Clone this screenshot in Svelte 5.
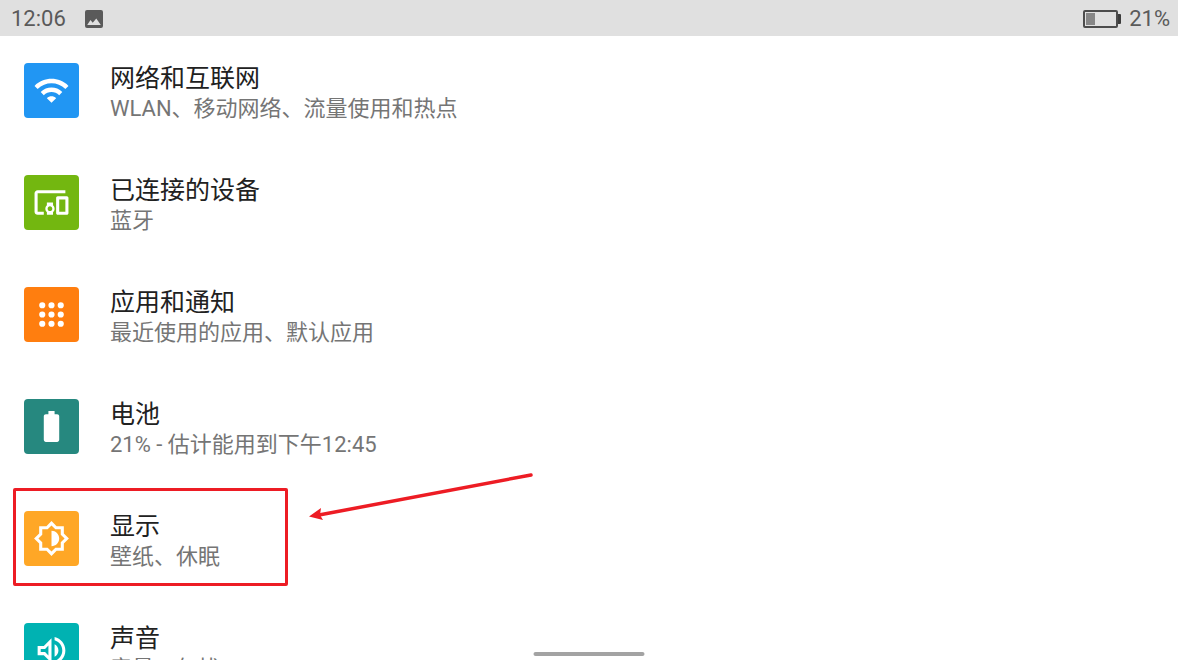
<script>
  const items = [
    { id: 'network', title: '网络和互联网', summary: 'WLAN、移动网络、流量使用和热点' },
    { id: 'devices', title: '已连接的设备', summary: '蓝牙' },
    { id: 'apps', title: '应用和通知', summary: '最近使用的应用、默认应用' },
    { id: 'battery', title: '电池', summary: '21% - 估计能用到下午12:45' },
    { id: 'display', title: '显示', summary: '壁纸、休眠', marked: true },
    { id: 'sound', title: '声音', summary: '音量、勿扰' }
  ];
  const paths = {
    network:
      'M1 9l2 2c4.97-4.97 13.03-4.97 18 0l2-2C16.93 2.93 7.08 2.93 1 9zm8 8l3 3 3-3c-1.65-1.66-4.34-1.66-6 0zm-4-4l2 2c2.76-2.76 7.24-2.76 10 0l2-2C15.14 9.14 8.87 9.14 5 13z',
    devices:
      'M3 6h18V4H3c-1.1 0-2 .9-2 2v12c0 1.1.9 2 2 2h4v-2H3V6zm10 6H9v1.78c-.61.55-1 1.33-1 2.22s.39 1.67 1 2.22V20h4v-1.78c.61-.55 1-1.34 1-2.22s-.39-1.67-1-2.22V12zm-2 5.5c-.83 0-1.5-.67-1.5-1.5s.67-1.5 1.5-1.5 1.5.67 1.5 1.5-.67 1.5-1.5 1.5zM22 8h-6c-.5 0-1 .5-1 1v10c0 .5.5 1 1 1h6c.5 0 1-.5 1-1V9c0-.5-.5-1-1-1zm-1 10h-4v-8h4v8z',
    apps: [6, 12, 18]
      .flatMap((y) => [6, 12, 18].map((x) => `M${x - 2} ${y}a2 2 0 1 0 4 0a2 2 0 1 0-4 0z`))
      .join(''),
    battery:
      'M15.67 4H14V2h-4v2H8.33C7.6 4 7 4.6 7 5.33v15.33C7 21.4 7.6 22 8.33 22h7.33c.74 0 1.34-.6 1.34-1.33V5.33C17 4.6 16.4 4 15.67 4z',
    display:
      'M20 15.31L23.31 12 20 8.69V4h-4.69L12 .69 8.69 4H4v4.69L.69 12 4 15.31V20h4.69L12 23.31 15.31 20H20v-4.69zm-2-.83V18h-3.52L12 20.48 9.52 18H6v-3.52L3.52 12 6 9.52V6h3.52L12 3.52 14.48 6H18v3.52L20.48 12 18 14.48zM12 7v10c2.76 0 5-2.24 5-5s-2.24-5-5-5z',
    sound:
      'M3 9v6h4l5 5V4L7 9H3zm7-.17v6.34L7.83 13H5v-2h2.83L10 8.83zM16.5 12c0-1.77-1.02-3.29-2.5-4.03v8.05c1.48-.73 2.5-2.25 2.5-4.02zM14 3.23v2.06c2.89.86 5 3.54 5 6.71s-2.11 5.85-5 6.71v2.06c4.01-.91 7-4.49 7-8.77s-2.99-7.86-7-8.77z'
  };
</script>

<div class="screen">
  <header>
    <time>12:06</time>
    <svg class="photo" viewBox="0 0 18 18" aria-hidden="true">
      <path fill-rule="evenodd" d="M18 16V2a2 2 0 0 0-2-2H2a2 2 0 0 0-2 2v14a2 2 0 0 0 2 2h14a2 2 0 0 0 2-2zM5.5 10L7.7 12.8L11.3 8.5L15.8 15H2.2z" />
    </svg>
    <svg class="level" viewBox="0 0 38 18" aria-hidden="true">
      <rect x="1" y="1" width="33" height="16" rx="1" fill="none" stroke="#4c4c4c" stroke-width="2" />
      <rect x="3" y="3" width="9" height="12" fill="#868686" />
      <path d="M35 4h2q1 0 1 1v8q0 1-1 1h-2z" fill="#3c3c3c" />
    </svg>
    <span>21%</span>
  </header>

  <nav aria-label="设置">
    {#each items as item (item.id)}
      <a href="#{item.id}">
        <span class="icon {item.id}">
          <svg viewBox="0 0 24 24" aria-hidden="true"><path d={paths[item.id]} /></svg>
        </span>
        <span class="text">
          <span class="title">{item.title}</span>
          <span class="summary">{item.summary}</span>
        </span>
        {#if item.marked}
          <span class="frame"></span>
          <svg class="arrow" viewBox="0 0 224 50" aria-hidden="true">
            <path d="M222 2L10 42" fill="none" stroke="#ed1c24" stroke-width="3.5" stroke-linecap="round" />
            <path d="M0 43.500L12 35L11 42L14 47z" fill="#ed1c24" />
          </svg>
        {/if}
      </a>
    {/each}
  </nav>
  <div class="handle"></div>
</div>

<style>
  :global(body) {
    margin: 0;
    background: #fff;
  }
  .screen {
    position: relative;
    height: 100vh;
    overflow: hidden;
    font-family: Roboto, 'Noto Sans CJK SC', sans-serif;
  }
  header {
    display: flex;
    align-items: center;
    box-sizing: border-box;
    height: 36px;
    padding: 2px 8px 0 11px;
    background: #e0e0e0;
    color: #5a5a5a;
    font-size: 22px;
    line-height: 32px;
  }
  .photo {
    width: 18px;
    height: 18px;
    margin-left: 19px;
    fill: #5a5a5a;
  }
  .level {
    width: 38px;
    height: 18px;
    margin: 0 8px 0 auto;
  }
  nav {
    display: flex;
    flex-direction: column;
    gap: 52px;
    padding: 27px 24px 0;
  }
  a {
    position: relative;
    display: flex;
    align-items: flex-start;
    gap: 31px;
    color: #212121;
    text-decoration: none;
  }
  .icon {
    display: grid;
    place-items: center;
    flex: none;
    width: 55px;
    height: 55px;
    border-radius: 4px;
  }
  .icon svg {
    width: 37px;
    height: 37px;
    fill: #fff;
  }
  .network { background: #2196f3; }
  .devices { background: #73b710; }
  .apps { background: #ff7e0f; }
  .battery { background: #26887f; }
  .display { background: #ffa726; }
  .sound { background: #00b2b2; }
  .text {
    display: flex;
    flex-direction: column;
    white-space: nowrap;
  }
  .title {
    font-size: 25px;
    line-height: 31px;
  }
  .summary {
    color: #757575;
    font-size: 22px;
    line-height: 29px;
  }
  .frame {
    position: absolute;
    top: -23px;
    left: -11px;
    box-sizing: border-box;
    width: 275px;
    height: 98px;
    border: 3px solid #ed1c24;
    border-radius: 2px;
  }
  .arrow {
    position: absolute;
    top: -38px;
    left: 285px;
    width: 224px;
    height: 50px;
  }
  .handle {
    position: absolute;
    bottom: 4px;
    left: 50%;
    width: 111px;
    height: 4px;
    border-radius: 2px;
    background: #a3a3a3;
    transform: translateX(-50%);
  }
</style>
